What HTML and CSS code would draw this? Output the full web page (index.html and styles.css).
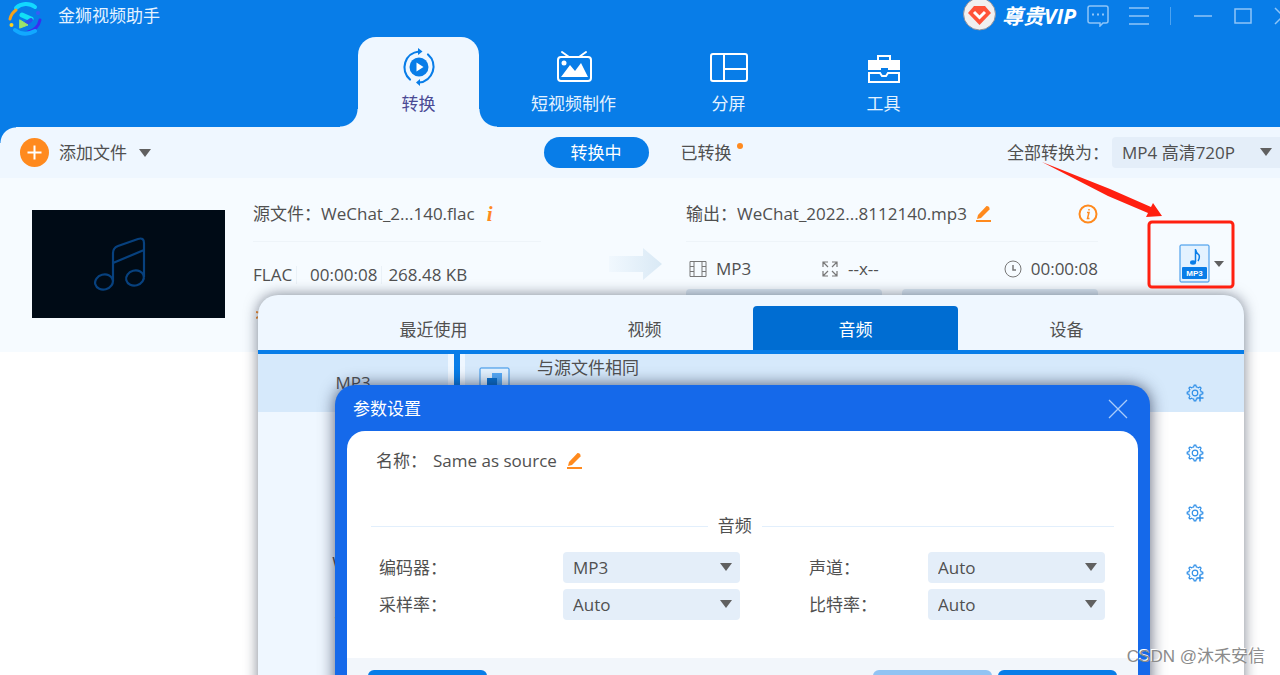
FILE: index.html
```html
<!DOCTYPE html>
<html lang="zh-CN">
<head>
  <meta charset="UTF-8">
  <title>金狮视频助手</title>
  <link rel="stylesheet" href="styles.css">
</head>
<body>
  <div class="app">
    <header class="header">
      <div class="title-bar">
        <svg class="logo" width="36" height="36" viewBox="0 0 36 36" fill="none" stroke-linecap="round">
          <path d="M8 7A15 15 0 0 1 27 6" stroke="#12d8ff" stroke-width="4"/>
          <path d="M2 18A15 15 0 0 1 8 9" stroke="#f5a21b" stroke-width="3"/>
          <circle cx="3.500" cy="24" r="2" fill="#ffd21c"/>
          <circle cx="30" cy="12" r="2" fill="#3b5bf5"/>
          <path d="M32 19A15 15 0 0 1 20 31" stroke="#3a2df0" stroke-width="3"/>
          <path d="M7 29Q16 36 27 30" stroke="#12a9ff" stroke-width="4"/>
          <path d="M14 14L23 18" stroke="#12e0f5" stroke-width="5"/>
          <path d="M23 19L17 23" stroke="#2b50ee" stroke-width="4"/>
          <path d="M12 19L20 24L12 27Z" fill="#9be36b" stroke="#9be36b"/>
        </svg>
        <span class="app-name">金狮视频助手</span>
        <div class="window-tools">
          <a href="#" class="vip">
            <svg width="33" height="33" viewBox="0 0 33 33">
              <circle cx="16.500" cy="15" r="16" fill="#f1f0f0" stroke="#8a8f9c"/>
              <path d="M11 7H22L28 14L16.500 26L5 14Z" fill="#ff5238"/>
              <path d="M11 13L16.500 18.500L22 13" fill="none" stroke="#fff" stroke-width="3"/>
            </svg>
            <span>尊贵VIP</span>
          </a>
          <button class="tool tool-msg" aria-label="消息">
            <svg width="22" height="22" viewBox="0 0 22 22" fill="none" stroke="#8fc5f7" stroke-width="1.500">
              <path d="M3 1H19Q21 1 21 3V16Q21 18 19 18H16L13 21V18H3Q1 18 1 16V3Q1 1 3 1Z"/>
              <path d="M5 9.500H7M10 9.500H12M15 9.500H17" stroke-width="2"/>
            </svg>
          </button>
          <button class="tool tool-menu" aria-label="菜单">
            <svg width="20" height="20" viewBox="0 0 20 20" stroke="#8fc5f7" stroke-width="1.500"><path d="M0 2H20M0 10H20M0 18H20"/></svg>
          </button>
          <span class="tool-sep"></span>
          <button class="tool tool-min" aria-label="最小化">
            <svg width="18" height="18" viewBox="0 0 18 18" stroke="#8fc5f7" stroke-width="1.500"><path d="M0 9H18"/></svg>
          </button>
          <button class="tool tool-max" aria-label="最大化">
            <svg width="18" height="18" viewBox="0 0 18 18" fill="none" stroke="#8fc5f7" stroke-width="1.500"><rect x="1" y="2" width="16" height="14"/></svg>
          </button>
          <button class="tool" aria-label="关闭">
            <svg width="18" height="18" viewBox="0 0 18 18" stroke="#8fc5f7" stroke-width="1.500"><path d="M1 1L17 17M17 1L1 17"/></svg>
          </button>
        </div>
      </div>

      <nav class="main-nav">
        <a href="#" class="nav-item active">
          <svg width="36" height="38" viewBox="0 0 36 38" fill="none" stroke="#087de8" stroke-width="2.200" stroke-linecap="round">
            <path d="M9 31.500A16 16 0 0 1 18 3.500"/>
            <path d="M27 6.500A16 16 0 0 1 18 34.500"/>
            <path d="M17 0L21.500 3.500L17 7Z" fill="#087de8" stroke="none"/>
            <path d="M19 31L15 34.500L19 38Z" fill="#087de8" stroke="none"/>
            <circle cx="18" cy="19" r="9.500" fill="#087de8" stroke="none"/>
            <path d="M15.500 14.500L22.500 19L15.500 23.500Z" fill="#fff" stroke="none"/>
          </svg>
          <span>转换</span>
        </a>
        <a href="#" class="nav-item">
          <svg width="36" height="38" viewBox="0 0 36 38" fill="none" stroke="#fff" stroke-width="2">
            <rect x="2" y="9" width="33" height="24" rx="3"/>
            <path d="M6 4L13 9M30 4L23 9" stroke-linecap="round"/>
            <circle cx="8" cy="15" r="2.500" fill="#fff" stroke="none"/>
            <path d="M5 29L14 17L19 23L25 15L32 29Z" fill="#fff" stroke="none"/>
          </svg>
          <span>短视频制作</span>
        </a>
        <a href="#" class="nav-item">
          <svg width="38" height="38" viewBox="0 0 38 38" fill="none" stroke="#fff" stroke-width="2">
            <rect x="1" y="6" width="36" height="27" rx="2"/>
            <path d="M14 6V33M14 21H37"/>
          </svg>
          <span>分屏</span>
        </a>
        <a href="#" class="nav-item">
          <svg width="36" height="38" viewBox="0 0 36 38" fill="none" stroke="#fff" stroke-width="2">
            <path d="M12 12V8H24V12"/>
            <path d="M2 12H34V22H22V20H15V22H2Z" fill="#fff" stroke="none"/>
            <path d="M3 25H14L16 28H20L22 25H33V34H3Z"/>
          </svg>
          <span>工具</span>
        </a>
      </nav>
    </header>

    <div class="toolbar">
      <button class="add-file">
        <svg width="29" height="29" viewBox="0 0 29 29"><circle cx="14.500" cy="14.500" r="14.500" fill="#ff8a1e"/><path d="M7.500 14.500H21.500M14.500 7.500V21.500" stroke="#fff" stroke-width="2"/></svg>
        <span>添加文件</span>
        <i class="caret"></i>
      </button>
      <div class="state-tabs">
        <button class="state active">转换中</button>
        <button class="state">已转换<i class="dot"></i></button>
      </div>
      <div class="convert-all">
        <label for="allFormat">全部转换为：</label>
        <span class="select">
          <select id="allFormat"><option>MP4 高清720P</option></select>
        </span>
      </div>
    </div>

    <main class="file-row">
      <div class="thumb">
        <svg width="52" height="54" viewBox="0 0 52 54" fill="none" stroke="#07417e" stroke-width="2.200">
          <ellipse cx="10" cy="45" rx="9" ry="7.500" transform="rotate(-15 10 45)"/>
          <ellipse cx="41" cy="41" rx="9" ry="7.500" transform="rotate(-15 41 41)"/>
          <path d="M19 44V16Q19 11 24 9L44 2Q50 0 50 6V40M19 26L50 13"/>
        </svg>
      </div>

      <div class="source">
        <div class="file-name">
          <span>源文件：</span><span>WeChat_2...140.flac</span>
          <i class="info-letter">i</i>
        </div>
        <div class="source-meta">
          <span>FLAC</span><span class="time">00:00:08</span><span>268.48 KB</span>
        </div>
        <svg class="cut" width="20" height="20" viewBox="0 0 20 20" fill="none" stroke="#f08a2c" stroke-width="2"><path d="M0 8L10 10L0 14M10 10L18 4M10 10L18 16"/></svg>
      </div>

      <svg class="to-arrow" width="53" height="34" viewBox="0 0 53 34">
        <defs><linearGradient id="arrowFill"><stop offset="0" stop-color="#f1f8fe"/><stop offset="1" stop-color="#d9e9f5"/></linearGradient></defs>
        <path d="M0 9H34V1L53 17L34 33V25H0Z" fill="url(#arrowFill)"/>
      </svg>

      <div class="output">
        <div class="file-name">
          <span>输出：</span><span>WeChat_2022...8112140.mp3</span>
          <button class="icon-btn" aria-label="重命名">
            <svg width="15" height="18" viewBox="0 0 15 18" fill="#ff8a1e"><path d="M1 14L2 10L10.500 1Q14 1 13.500 4.500L5 13Z"/><rect y="15" width="15" height="2"/></svg>
          </button>
          <button class="icon-btn output-info" aria-label="信息">
            <svg width="20" height="20" viewBox="0 0 20 20" fill="none" stroke="#ff8a1e" stroke-width="2"><circle cx="10" cy="10" r="8.500"/><path d="M9 8.500H11L9.500 14.500H11.500M11 5V6.500" stroke-width="1.500"/></svg>
          </button>
        </div>
        <div class="output-meta">
          <span>
            <svg width="18" height="18" viewBox="0 0 18 18" fill="none" stroke="#777"><path d="M1 1.500H17V16.500H1ZM5 1.500V16.500M13 1.500V16.500M1 6.500H5M1 11.500H5M13 6.500H17M13 11.500H17"/></svg>
            MP3
          </span>
          <span>
            <svg width="18" height="18" viewBox="0 0 18 18" fill="none" stroke="#777" stroke-width="1.200"><path d="M2 7V2H7M2 2L7 7M11 2H16V7M16 2L11 7M2 11V16H7M2 16L7 11M16 11V16H11M16 16L11 11"/></svg>
            --x--
          </span>
          <span>
            <svg width="18" height="18" viewBox="0 0 18 18" fill="none" stroke="#777"><circle cx="9" cy="9" r="8"/><path d="M9 5V10H12" stroke-width="1.500"/></svg>
            00:00:08
          </span>
        </div>
        <div class="output-bars"><span></span><span></span></div>
      </div>

      <button class="format-btn" aria-label="MP3">
        <svg width="31" height="39" viewBox="0 0 31 39">
          <rect x="1" y="1" width="29" height="37" rx="1" fill="#e3f2ff" stroke="#2f8fe8"/>
          <ellipse cx="14" cy="18.500" rx="3" ry="2.200" fill="#087de8"/>
          <path d="M16.500 18V5Q17 9 20 11Q21 14 19 17" fill="none" stroke="#087de8" stroke-width="1.500"/>
          <rect x="3" y="23" width="25" height="12" rx="1" fill="#087de8"/>
          <text x="15.500" y="32" text-anchor="middle" class="format-text">MP3</text>
        </svg>
        <i class="caret small"></i>
      </button>
    </main>

    <section class="format-panel">
      <div class="format-tabs">
        <button>最近使用</button>
        <button>视频</button>
        <button class="active">音频</button>
        <button>设备</button>
      </div>
      <div class="format-body">
        <ul class="format-list">
          <li class="selected">MP3</li>
          <li>AAC</li>
          <li>AC3</li>
          <li>WMA</li>
          <li>WAV</li>
        </ul>
        <div class="scroll"></div>
        <ul class="preset-list">
          <li class="selected">
            <svg class="preset-icon" width="31" height="39" viewBox="0 0 31 39"><rect x="1" y="1" width="29" height="37" rx="1" fill="#e3f2ff" stroke="#2f8fe8"/><rect x="13" y="6" width="10" height="14" fill="#55aaf8"/><rect x="8" y="11" width="10" height="14" fill="#0870cf"/></svg>
            <span>与源文件相同</span>
            <button class="icon-btn gear" aria-label="设置"><svg width="18" height="18" viewBox="0 0 18 18"><use href="#gear"/></svg></button>
          </li>
          <li><button class="icon-btn gear" aria-label="设置"><svg width="18" height="18" viewBox="0 0 18 18"><use href="#gear"/></svg></button></li>
          <li><button class="icon-btn gear" aria-label="设置"><svg width="18" height="18" viewBox="0 0 18 18"><use href="#gear"/></svg></button></li>
          <li><button class="icon-btn gear" aria-label="设置"><svg width="18" height="18" viewBox="0 0 18 18"><use href="#gear"/></svg></button></li>
        </ul>
      </div>
    </section>

    <section class="dialog" role="dialog" aria-labelledby="dialogTitle">
      <div class="dialog-title">
        <span id="dialogTitle">参数设置</span>
        <button class="icon-btn" aria-label="关闭">
          <svg width="20" height="20" viewBox="0 0 20 20" stroke="#a9cbfa" stroke-width="1.300"><path d="M1 1L19 19M19 1L1 19"/></svg>
        </button>
      </div>
      <div class="dialog-body">
        <div class="preset-name">
          <span>名称：</span><span>Same as source</span>
          <button class="icon-btn" aria-label="重命名">
            <svg width="15" height="18" viewBox="0 0 15 18" fill="#ff8a1e"><path d="M1 14L2 10L10.500 1Q14 1 13.500 4.500L5 13Z"/><rect y="15" width="15" height="2"/></svg>
          </button>
        </div>
        <div class="divider">音频</div>
        <div class="params">
          <label for="encoder">编码器：</label>
          <span class="select"><select id="encoder"><option>MP3</option></select></span>
          <label for="channel" class="second">声道：</label>
          <span class="select"><select id="channel"><option>Auto</option></select></span>
          <label for="sample">采样率：</label>
          <span class="select"><select id="sample"><option>Auto</option></select></span>
          <label for="bitrate" class="second">比特率：</label>
          <span class="select"><select id="bitrate"><option>Auto</option></select></span>
        </div>
        <div class="dialog-footer">
          <button aria-label="恢复默认"></button>
          <button class="light" aria-label="取消"></button>
          <button aria-label="确定"></button>
        </div>
      </div>
    </section>

    <svg class="mark" width="200" height="135" viewBox="0 0 200 135">
      <path d="M7 7L75 34L116 52L118 48L127 61L111 62L113 58L73 41Z" fill="#ff2010"/>
      <rect x="114" y="67" width="84" height="65" rx="3" fill="none" stroke="#ff2010" stroke-width="3"/>
    </svg>

    <div class="watermark">CSDN @沐禾安信</div>
  </div>

  <svg class="symbols" width="0" height="0">
    <symbol id="gear" viewBox="0 0 18 18">
      <g fill="none" stroke="#2f8fe8" stroke-width="1.200">
        <path id="tooth" d="M6.600 3.200L7.700 3L8.200 1.200H9.800L10.300 3L11.400 3.200"/>
        <use href="#tooth" transform="rotate(45 9 9)"/>
        <use href="#tooth" transform="rotate(90 9 9)"/>
        <use href="#tooth" transform="rotate(180 9 9)"/>
        <use href="#tooth" transform="rotate(225 9 9)"/>
        <use href="#tooth" transform="rotate(270 9 9)"/>
        <use href="#tooth" transform="rotate(315 9 9)"/>
        <circle cx="9" cy="9" r="2.800"/>
        <path d="M10.500 14H17.500M14 10.500V17.500" stroke-width="1.500"/>
      </g>
    </symbol>
  </svg>
</body>
</html>
```

FILE: styles.css
```css
* {
  box-sizing: border-box;
}
body {
  margin: 0;
  background: #fff;
  color: #505050;
  font-family: "Open Sans", "Noto Sans CJK SC", sans-serif;
  font-size: 17px;
  line-height: 24px;
}
button,
select {
  font: inherit;
  color: inherit;
  border: 0;
  background: none;
  padding: 0;
  margin: 0;
}
button {
  cursor: pointer;
}
a {
  color: inherit;
  text-decoration: none;
}
ul {
  list-style: none;
  margin: 0;
  padding: 0;
}
svg {
  display: block;
  flex: none;
}
.app {
  position: relative;
  height: 100vh;
  overflow: hidden;
}
.symbols {
  position: absolute;
}

/* header */
.header {
  background: #087de8;
  color: #e4f2ff;
}
.title-bar {
  display: flex;
  align-items: center;
  height: 37px;
  padding-left: 8px;
  overflow: hidden;
}
.app-name {
  margin-left: 14px;
  padding-bottom: 5px;
}
.window-tools {
  display: flex;
  align-items: center;
  height: 31px;
  margin: 0 -12px 6px auto;
}
.vip {
  display: flex;
  align-items: center;
  gap: 6px;
  margin-right: 11px;
  color: #fff;
  font-size: 21px;
  font-weight: bold;
  font-style: italic;
}
.tool-msg {
  margin-right: 20px;
}
.tool-menu {
  margin-right: 21px;
}
.tool-sep {
  width: 1px;
  height: 18px;
  margin-right: 23px;
  background: #4ea3f0;
}
.tool-min,
.tool-max {
  margin-right: 22px;
}
.main-nav {
  display: flex;
  justify-content: center;
  gap: 34px;
  height: 90px;
  padding-left: 22px;
}
.nav-item {
  position: relative;
  display: flex;
  flex-direction: column;
  align-items: center;
  gap: 6px;
  width: 121px;
  padding-top: 11px;
}
.nav-item.active {
  background: #eff7ff;
  color: #4b4a94;
  border-radius: 18px 18px 0 0;
}
.nav-item.active::before,
.nav-item.active::after {
  content: "";
  position: absolute;
  bottom: 0;
  width: 18px;
  height: 18px;
}
.nav-item.active::before {
  right: 100%;
  background: radial-gradient(circle at 0 0, #087de8 17px, #eff7ff 18px);
}
.nav-item.active::after {
  left: 100%;
  background: radial-gradient(circle at 100% 0, #087de8 17px, #eff7ff 18px);
}

/* toolbar */
.toolbar {
  display: grid;
  grid-template-columns: 1fr auto 1fr;
  align-items: center;
  height: 51px;
  padding: 0 14px 0 20px;
  background: radial-gradient(circle at 16px 16px, #eff7ff 15px, #087de8 16px) 0 0 / 16px 16px no-repeat, #eff7ff;
}
.add-file {
  display: flex;
  align-items: center;
  gap: 10px;
}
.caret {
  border: 6px solid transparent;
  border-top: 8px solid #606060;
  border-bottom: 0;
}
.add-file .caret {
  margin-left: 2px;
}
.caret.small {
  border-width: 6px 5px 0;
}
.state-tabs {
  display: flex;
  gap: 32px;
}
.state {
  position: relative;
  height: 31px;
}
.state.active {
  width: 105px;
  border-radius: 16px;
  background: #087de8;
  color: #fff;
}
.state:last-child {
  padding-right: 11px;
}
.dot {
  position: absolute;
  right: 0;
  top: 6px;
  width: 6px;
  height: 6px;
  border-radius: 50%;
  background: #ff8a1e;
}
.convert-all {
  display: flex;
  align-items: center;
  justify-content: flex-end;
  gap: 3px;
  margin-right: -28px;
}
.convert-all .select {
  width: 182px;
}
.select {
  position: relative;
  display: block;
}
.select::after {
  content: "";
  position: absolute;
  right: 8px;
  top: 11px;
  border: 6px solid transparent;
  border-top: 8px solid #606060;
  border-bottom: 0;
  pointer-events: none;
}
.convert-all .select::after {
  right: 22px;
}
.select select {
  appearance: none;
  width: 100%;
  height: 31px;
  padding: 0 10px;
  border-radius: 4px;
  background: #e4eef9;
}

/* file being converted */
.file-row {
  display: flex;
  align-items: flex-start;
  height: 174px;
  padding: 32px 56px 0 32px;
  background: #f6fbff;
}
.thumb {
  display: flex;
  align-items: center;
  justify-content: center;
  width: 193px;
  height: 108px;
  margin-right: 28px;
  padding-right: 18px;
  background: #000b16;
}
.source {
  flex: 1;
  margin-right: 68px;
}
.file-name {
  display: flex;
  align-items: center;
  height: 32px;
  padding-bottom: 24px;
  border-bottom: 1px solid #eef4f9;
}
.file-name span {
  line-height: 8px;
  white-space: nowrap;
}
.info-letter {
  margin-left: 12px;
  color: #ff8a1e;
  font-family: "Liberation Serif", serif;
  font-size: 21px;
  font-weight: bold;
  line-height: 8px;
}
.source-meta {
  display: flex;
  align-items: center;
  gap: 4px;
  padding-top: 21px;
}
.source-meta span + span {
  padding-left: 6px;
  border-left: 1px solid #eaf1f7;
  line-height: 18px;
  margin: 3px 0;
}
.source-meta .time {
  padding-left: 13px;
}
.cut {
  margin: 17px 0 0 3px;
}
.to-arrow {
  margin: 37px 24px 0 0;
}
.output {
  width: 412px;
}
.file-name .icon-btn {
  margin-left: 9px;
}
.file-name .output-info {
  margin-left: auto;
}
.output-meta {
  display: grid;
  grid-template-columns: 132px 1fr auto;
  padding: 15px 0 0 3px;
}
.output-meta span {
  display: flex;
  align-items: center;
  gap: 9px;
}
.output-bars {
  display: flex;
  gap: 20px;
  margin-top: 8px;
}
.output-bars span {
  flex: 1;
  height: 31px;
  border-radius: 4px;
  background: #d9e6f2;
}
.format-btn {
  display: flex;
  align-items: center;
  gap: 4px;
  margin: 34px 0 0 81px;
}
.format-text {
  fill: #fff;
  font-family: "Liberation Sans", sans-serif;
  font-size: 8px;
  font-weight: bold;
}

/* format popup */
.format-panel {
  position: absolute;
  top: 295px;
  left: 258px;
  right: 36px;
  bottom: -40px;
  display: flex;
  flex-direction: column;
  overflow: hidden;
  border-radius: 20px;
  background: #eff7ff;
  box-shadow: 0 0 14px rgba(40, 50, 70, 0.6);
}
.format-tabs {
  display: grid;
  grid-template-columns: repeat(4, 1fr);
  gap: 6px;
  padding: 11px 75px 0 73px;
  border-bottom: 4px solid #087de8;
}
.format-tabs button {
  height: 44px;
  padding-top: 4px;
  border-radius: 4px 4px 0 0;
}
.format-tabs .active {
  background: #006dd2;
  color: #fff;
}
.format-body {
  flex: 1;
  display: flex;
}
.format-list {
  width: 190px;
}
.format-list li {
  height: 58px;
  margin-bottom: 2px;
  line-height: 58px;
  text-align: center;
}
.selected {
  background: #d6e9fb;
}
.scroll {
  width: 6px;
  margin: 0 5px 0 6px;
  background: #087de8;
}
.preset-list {
  flex: 1;
  background: #fff;
}
.preset-list li {
  display: flex;
  align-items: flex-start;
  height: 58px;
  margin-bottom: 2px;
  padding: 0 40px 0 14px;
}
.preset-icon {
  margin: 13px 27px 0 0;
}
.preset-list span {
  padding-top: 2px;
}
.gear {
  margin: 30px 0 0 auto;
}

/* settings dialog */
.dialog {
  position: absolute;
  top: 385px;
  left: 335px;
  right: 130px;
  padding: 0 12px;
  border-radius: 20px;
  background: #1569ea;
  box-shadow: 0 0 16px rgba(20, 30, 60, 0.7);
}
.dialog-title {
  display: flex;
  align-items: center;
  justify-content: space-between;
  height: 46px;
  padding: 2px 10px 0 6px;
  color: #fff;
}
.dialog-body {
  overflow: hidden;
  border-radius: 18px 18px 0 0;
  background: #fff;
}
.preset-name {
  display: flex;
  align-items: center;
  padding: 18px 29px 0;
}
.preset-name span:first-child {
  margin-right: 6px;
}
.preset-name .icon-btn {
  margin-left: 10px;
}
.divider {
  display: flex;
  align-items: center;
  gap: 10px;
  margin: 41px 24px 14px;
}
.divider::before,
.divider::after {
  content: "";
  flex: 22;
  height: 1px;
  background: #e2effc;
}
.divider::after {
  flex: 23;
}
.params {
  display: grid;
  grid-template-columns: 184px 1fr 188px 1fr;
  gap: 6px 0;
  align-items: center;
  padding: 0 33px 38px 32px;
}
.params .second {
  padding-left: 69px;
}
.dialog-footer {
  display: flex;
  gap: 6px;
  height: 60px;
  padding: 12px 21px;
  background: #f2f6fb;
}
.dialog-footer button {
  width: 119px;
  border-radius: 6px;
  background: #087de8;
}
.dialog-footer button:first-child {
  margin-right: auto;
}
.dialog-footer .light {
  background: #91c3f3;
}

/* overlays */
.mark {
  position: absolute;
  top: 155px;
  right: 45px;
  pointer-events: none;
}
.watermark {
  position: absolute;
  right: 15px;
  bottom: 6px;
  color: #8b8b8b;
  font-family: "Liberation Sans", "Noto Sans CJK SC", sans-serif;
  font-size: 17px;
  text-shadow: -1px -1px 0 #fff;
}
```
